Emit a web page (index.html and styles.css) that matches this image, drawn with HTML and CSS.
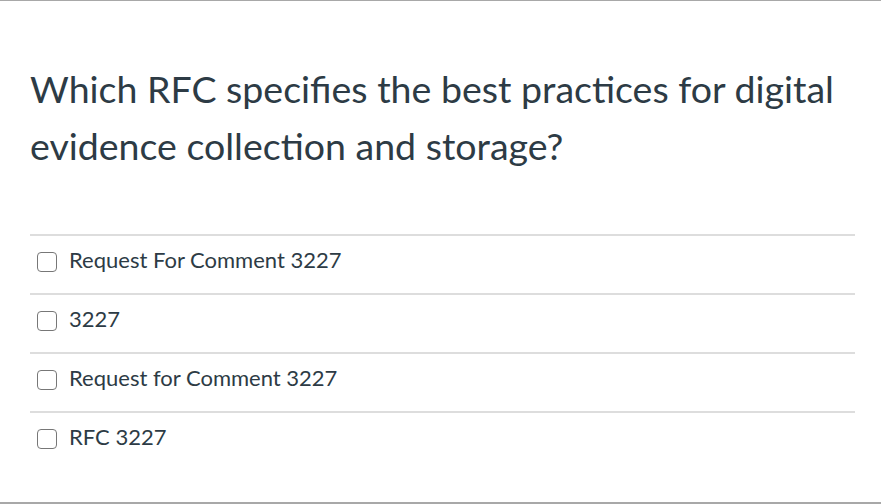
FILE: index.html
```html
<!DOCTYPE html>
<html lang="en">
<head>
<meta charset="utf-8">
<title>Question</title>
<link rel="stylesheet" href="styles.css">
</head>
<body>
<div class="question">
  <div class="question-text">Which RFC specifies the best practices for digital evidence collection and storage?</div>
  <div class="answers">
    <label class="answer"><span class="box"></span><span class="label">Request For Comment 3227</span></label>
    <label class="answer"><span class="box"></span><span class="label">3227</span></label>
    <label class="answer"><span class="box"></span><span class="label">Request for Comment 3227</span></label>
    <label class="answer"><span class="box"></span><span class="label">RFC 3227</span></label>
  </div>
</div>
</body>
</html>
```
FILE: styles.css
```css
html, body {
  margin: 0;
  padding: 0;
  background: #fff;
}
body {
  font-family: Lato, "Noto Sans", sans-serif;
  color: #2d3b45;
}
.question {
  height: 504px;
  box-sizing: border-box;
  border-top: 1px solid #a8a8a8;
  border-bottom: 2px solid #a8a8a8;
  padding: 0 26px 0 30px;
}
.question-text {
  font-size: 37.5px;
  line-height: 57px;
  padding-top: 59px;
  padding-bottom: 60px;
}
.answers {
  border-top: 2px solid #dddddd;
}
.answer {
  display: flex;
  align-items: flex-start;
  gap: 12px;
  height: 57px;
  padding-left: 7px;
  border-bottom: 2px solid #dddddd;
  font-size: 22px;
  line-height: 26px;
}
.answer:last-child {
  border-bottom: none;
}
.box {
  width: 18px;
  height: 18px;
  margin-top: 16px;
  border: 1px solid #777;
  border-radius: 4px;
  flex: none;
}
.label {
  margin-top: 11px;
}
```
